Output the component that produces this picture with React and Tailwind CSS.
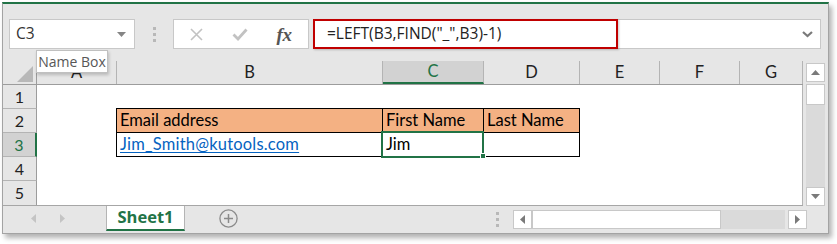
import React from "react";

const ui = "font-['Open_Sans','Noto_Sans',sans-serif]";
const cellFont = "font-['Lato','Carlito',sans-serif]";

function ColHeader({ w, label, selected }) {
  return (
    <div
      className={`${w} h-full flex items-center justify-center ${cellFont} text-[16.5px] border-r border-r-[#b4b4b4] ${
        selected
          ? "bg-[#d2d2d2] text-[#217346] border-b-2 border-b-[#217346]"
          : "text-[#222]"
      }`}
    >
      {label}
    </div>
  );
}

function RowHeader({ n, selected, last }) {
  return (
    <div
      className={`w-[34px] h-[24px] shrink-0 flex items-center justify-center ${cellFont} text-[16px] ${
        last ? "" : "border-b border-b-[#b4b4b4]"
      } ${
        selected
          ? "bg-[#d2d2d2] text-[#217346] border-r-2 border-r-[#217346]"
          : "text-[#222] border-r border-r-[#9c9c9c]"
      }`}
    >
      {n}
    </div>
  );
}

function Row({ n, selected, last, b, c, d }) {
  return (
    <div className="flex h-[24px]">
      <RowHeader n={n} selected={selected} last={last} />
      <div className="w-[79px] bg-white" />
      {b}
      {c}
      {d}
      <div className="w-[80px] bg-white" />
      <div className="w-[80px] bg-white" />
      <div className="w-[63px] bg-white border-r border-r-[#b4b4b4]" />
    </div>
  );
}

function Blank({ w }) {
  return <div className={`${w} bg-white`} />;
}

export default function App() {
  const cellText = `${cellFont} text-[16.5px] text-black flex items-center pl-[3px] whitespace-nowrap`;
  return (
    <div className="w-[837px] h-[244px] bg-white overflow-hidden">
      <div
        className={`relative ml-[2px] mt-[2px] w-[827px] h-[232px] flex flex-col bg-[#e6e6e6] border-t-2 border-t-[#217346] border-x border-b border-x-[#a3a3a3] border-b-[#a3a3a3] shadow-[3px_4px_5px_rgba(0,0,0,0.3)] ${ui}`}
      >
        {/* Formula toolbar */}
        <div className="h-[57px] shrink-0 flex items-start pt-[15px] pl-[6px]">
          <div className="w-[126px] h-[30px] bg-white border border-[#c8c8c8] flex items-center justify-between pl-[6px] pr-[8px]">
            <span className="text-[15.5px] text-[#333] leading-none">C3</span>
            <svg width="9" height="5" viewBox="0 0 9 5">
              <path d="M0 0 H9 L4.5 5 Z" fill="#858585" />
            </svg>
          </div>
          <div className="w-[38px] h-[30px] flex flex-col items-center justify-center gap-[3px]">
            <div className="w-[3px] h-[3px] bg-[#b8b8b8]" />
            <div className="w-[3px] h-[3px] bg-[#b8b8b8]" />
            <div className="w-[3px] h-[3px] bg-[#b8b8b8]" />
          </div>
          <div className="w-[136px] h-[30px] bg-white border border-[#c8c8c8] flex items-center">
            <div className="w-[44px] h-full flex items-center justify-center">
              <svg width="13" height="13" viewBox="0 0 13 13">
                <path d="M1 1 L12 12 M12 1 L1 12" stroke="#c2c2c2" strokeWidth="1.6" fill="none" />
              </svg>
            </div>
            <div className="w-[44px] h-full flex items-center justify-center">
              <svg width="16" height="13" viewBox="0 0 16 13">
                <path d="M1.5 6.5 L6 11 L14.5 1.5" stroke="#c2c2c2" strokeWidth="2.8" fill="none" />
              </svg>
            </div>
            <div className="w-[44px] h-full flex items-center justify-center">
              <span className="font-['Liberation_Serif',serif] italic font-bold text-[19px] text-[#555] leading-none tracking-[-0.5px]">
                fx
              </span>
            </div>
          </div>
          <div className="relative ml-[4px] w-[508px] h-[30px] bg-white border border-[#c8c8c8] flex items-center pl-[13px]">
            <span className="text-[15.5px] text-[#222] leading-none whitespace-nowrap">=LEFT(B3,FIND("_",B3)-1)</span>
            <div className="absolute -left-[1px] -top-[1px] w-[305px] h-[30px] border-2 border-[#c00000] shadow-[1px_1px_2px_rgba(0,0,0,0.2)]" />
            <svg className="absolute right-[7px] top-[11px]" width="11" height="7" viewBox="0 0 11 7">
              <path d="M1 1 L5.5 5 L10 1" stroke="#7a7a7a" strokeWidth="2.2" fill="none" />
            </svg>
          </div>
        </div>

        {/* Grid */}
        <div className="flex shrink-0">
          <div className="w-[800px] flex flex-col border-b border-b-[#a6a6a6]">
            <div className="flex h-[24px] border-b border-b-[#9c9c9c]">
              <div className="w-[34px] h-full border-r border-r-[#9c9c9c] flex items-end justify-end">
                <svg width="17" height="16" viewBox="0 0 17 16" className="mb-[2px] mr-[2px]">
                  <path d="M0 16 L16 0 V16 Z" fill="#b8b8b8" />
                </svg>
              </div>
              <ColHeader w="w-[80px]" label="A" />
              <ColHeader w="w-[266px]" label="B" />
              <ColHeader w="w-[101px]" label="C" selected />
              <ColHeader w="w-[96px]" label="D" />
              <ColHeader w="w-[80px]" label="E" />
              <ColHeader w="w-[80px]" label="F" />
              <ColHeader w="w-[63px]" label="G" />
            </div>
            <Row
              n="1"
              b={<div className="w-[267px] bg-white border-b border-b-black" />}
              c={<div className="w-[101px] bg-white border-b border-b-black" />}
              d={<div className="w-[96px] bg-white border-b border-b-black" />}
            />
            <Row
              n="2"
              b={
                <div className={`w-[267px] bg-[#f4b183] border-b border-x border-black ${cellText}`}>
                  Email address
                </div>
              }
              c={
                <div className={`w-[101px] bg-[#f4b183] border-b border-r border-black ${cellText}`}>
                  First Name
                </div>
              }
              d={
                <div className={`w-[96px] bg-[#f4b183] border-b border-r border-black ${cellText}`}>
                  Last Name
                </div>
              }
            />
            <Row
              n="3"
              selected
              b={
                <div className={`w-[267px] bg-white border-b border-x border-black ${cellText}`}>
                  <span className="text-[#0563c1] underline decoration-[#0563c1] underline-offset-[2px] tracking-[0.2px]">
                    Jim_Smith@kutools.com
                  </span>
                </div>
              }
              c={
                <div className={`relative w-[101px] bg-white border-b border-r border-black ${cellText}`}>
                  Jim
                  <div className="absolute -left-[2px] -top-[2px] w-[103px] h-[27px] border-2 border-[#217346]" />
                  <div className="absolute right-[-3px] bottom-[-3px] w-[6px] h-[6px] bg-[#217346] border border-white" />
                </div>
              }
              d={<div className="w-[96px] bg-white border-b border-r border-black" />}
            />
            <Row n="4" b={<Blank w="w-[267px]" />} c={<Blank w="w-[101px]" />} d={<Blank w="w-[96px]" />} />
            <Row n="5" last b={<Blank w="w-[267px]" />} c={<Blank w="w-[101px]" />} d={<Blank w="w-[96px]" />} />
          </div>

          {/* Vertical scrollbar */}
          <div className="ml-[3px] w-[19px] flex flex-col pt-[2px]">
            <div className="h-[19px] bg-white border border-[#c8c8c8] flex items-center justify-center">
              <svg width="9" height="5" viewBox="0 0 9 5">
                <path d="M0 5 H9 L4.5 0 Z" fill="#7a7a7a" />
              </svg>
            </div>
            <div className="mt-[2px] h-[21px] bg-white border border-[#c8c8c8]" />
            <div className="flex-1 bg-[#dadada]" />
            <div className="h-[19px] bg-white border border-[#c8c8c8] flex items-center justify-center">
              <svg width="9" height="5" viewBox="0 0 9 5">
                <path d="M0 0 H9 L4.5 5 Z" fill="#7a7a7a" />
              </svg>
            </div>
          </div>
        </div>

        {/* Sheet tabs bar */}
        <div className="flex-1 flex items-start">
          <div className="w-[103px] h-[25px] flex items-center">
            <svg className="ml-[28px]" width="5" height="9" viewBox="0 0 5 9">
              <path d="M5 0 V9 L0 4.5 Z" fill="#c4c4c4" />
            </svg>
            <svg className="ml-[24px]" width="5" height="9" viewBox="0 0 5 9">
              <path d="M0 0 V9 L5 4.5 Z" fill="#c4c4c4" />
            </svg>
          </div>
          <div className="w-[79px] h-[25px] bg-white border-x border-x-[#b4b4b4] border-b-2 border-b-[#217346] flex items-center justify-center">
            <span className="text-[16.5px] font-bold text-[#217346] leading-none">Sheet1</span>
          </div>
          <div className="ml-[34px] h-[25px] flex items-center">
            <svg width="19" height="19" viewBox="0 0 19 19">
              <circle cx="9.5" cy="9.5" r="8.6" stroke="#8a8a8a" strokeWidth="1.3" fill="none" />
              <path d="M9.5 5 V14 M5 9.5 H14" stroke="#8a8a8a" strokeWidth="1.5" />
            </svg>
          </div>
          <div className="ml-[258px] h-[25px] flex flex-col items-center justify-center gap-[3px] pt-[2px]">
            <div className="w-[3px] h-[3px] bg-[#b8b8b8]" />
            <div className="w-[3px] h-[3px] bg-[#b8b8b8]" />
            <div className="w-[3px] h-[3px] bg-[#b8b8b8]" />
          </div>
          <div className="ml-[14px] mt-[4px] flex h-[19px]">
            <div className="w-[19px] h-full bg-white border border-[#c8c8c8] flex items-center justify-center">
              <svg width="5" height="9" viewBox="0 0 5 9">
                <path d="M5 0 V9 L0 4.5 Z" fill="#7a7a7a" />
              </svg>
            </div>
            <div className="w-[189px] h-full bg-white border border-[#c8c8c8]" />
            <div className="w-[64px] h-full bg-[#dadada]" />
            <div className="ml-[3px] w-[19px] h-full bg-white border border-[#c8c8c8] flex items-center justify-center">
              <svg width="5" height="9" viewBox="0 0 5 9">
                <path d="M0 0 V9 L5 4.5 Z" fill="#7a7a7a" />
              </svg>
            </div>
          </div>
        </div>

        {/* Name Box tooltip */}
        <div className="absolute left-[33px] top-[46px] w-[72px] h-[23px] bg-white border border-[#c0c0c0] shadow-[1px_2px_3px_rgba(0,0,0,0.2)] flex items-center justify-center">
          <span className="text-[14px] text-[#575757] leading-none whitespace-nowrap">Name Box</span>
        </div>
      </div>
    </div>
  );
}
